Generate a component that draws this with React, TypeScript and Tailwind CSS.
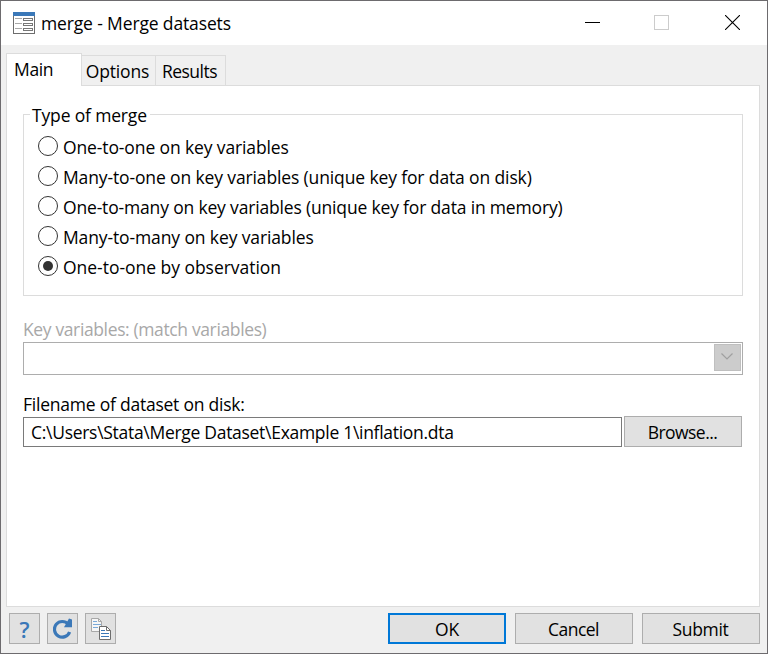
import { useState } from 'react';
import type { ReactNode } from 'react';

const mergeTypes = [
  { id: '1:1', label: 'One-to-one on key variables', text: 'tracking-[-0.12px]' },
  { id: 'm:1', label: 'Many-to-one on key variables (unique key for data on disk)', text: 'tracking-[-0.13px]' },
  { id: '1:m', label: 'One-to-many on key variables (unique key for data in memory)', text: 'tracking-[-0.17px]' },
  { id: 'm:m', label: 'Many-to-many on key variables', text: 'tracking-[-0.12px]' },
  { id: 'obs', label: 'One-to-one by observation', text: 'tracking-[-0.03px]' },
];

function FormIcon() {
  return (
    <svg width="22" height="22" viewBox="0 0 22 22" fill="none" shapeRendering="crispEdges">
      <rect x="0.5" y="0.5" width="21" height="21" fill="#fff" stroke="#6d6d6d" />
      <rect width="22" height="4" fill="#3b78b8" />
      <path d="M2 6.5h7M2 11.5h7M2 16.5h7" stroke="#a8a8a8" />
      <path d="M10.5 6.5h9v2h-9zM10.5 11.5h9v2h-9zM10.5 16.5h9v2h-9z" stroke="#777" />
    </svg>
  );
}

function RefreshIcon() {
  return (
    <svg width="19" height="21" viewBox="0 0 19 21" fill="none">
      <path d="M15.2 6.2A7.8 7.8 0 1 0 16.6 14" stroke="#3b78b8" strokeWidth="3.2" />
      <path d="M16 0.5L19 1.5V9.3H11z" fill="#3b78b8" />
    </svg>
  );
}

function CopyIcon() {
  return (
    <svg width="20" height="22" viewBox="0 0 20 22" fill="none">
      <path d="M0.5 0.5h7l3 3v10h-10z" fill="#f6f6f6" stroke="#a8a8a8" />
      <path d="M7.5 0.5v3h3" stroke="#a8a8a8" />
      <path d="M2 3.5h4M2 6.5h8M2 9.5h5" stroke="#7aa9d8" />
      <path d="M8.5 8.5h7l4 4v9h-11z" fill="#fff" stroke="#6d6d6d" />
      <path d="M15.5 8.5v4h4" stroke="#6d6d6d" />
      <path d="M10 12.5h4M10 15.5h8M10 18.5h8" stroke="#3b78b8" />
    </svg>
  );
}

function ToolButton({ label, children }: { label: string; children: ReactNode }) {
  return (
    <button aria-label={label} className="flex h-[31px] w-[31px] items-center justify-center border border-[#adadad] bg-[#e1e1e1]">
      {children}
    </button>
  );
}

export default function App() {
  const [selected, setSelected] = useState('obs');

  return (
    <div className="flex h-[654px] w-[768px] flex-col overflow-hidden border border-[#6d6b6e] bg-[#f0f0f0] font-['Open_Sans','Noto_Sans',sans-serif] text-[17.5px] leading-6 text-black">
      {/* Title bar */}
      <header className="flex h-11 shrink-0 items-center bg-white pl-3">
        <FormIcon />
        <h1 className="ml-1.5 tracking-[-0.14px] whitespace-pre">merge - Merge datasets</h1>
        <div className="mr-[27px] mb-px ml-auto flex items-center">
          <svg className="mr-[54px]" width="15" height="15" shapeRendering="crispEdges">
            <path d="M0 7.5h15" stroke="#000" />
          </svg>
          <svg className="mr-14" width="15" height="15" fill="none" shapeRendering="crispEdges">
            <rect x="0.5" y="0.5" width="14" height="14" stroke="#ccc" />
          </svg>
          <svg width="15" height="15" fill="none">
            <path d="M0 0l15 15M15 0l-15 15" stroke="#000" strokeWidth="1.1" />
          </svg>
        </div>
      </header>

      {/* Tabs */}
      <nav className="z-10 mt-2 -mb-px ml-[5px] flex h-[33px] shrink-0 items-end">
        <button className="h-[33px] w-[76px] border border-b-0 border-[#dcdcdc] bg-white pb-[3px] pl-[7px] text-left tracking-[-0.35px]">Main</button>
        <button className="h-[31px] w-[73px] border-y border-[#dcdcdc] pr-0.5 text-center tracking-[-0.13px]">Options</button>
        <button className="h-[31px] w-[71px] border border-[#dcdcdc] pr-0.5 text-center tracking-[-0.5px]">Results</button>
      </nav>

      <main className="mr-[7px] ml-[5px] flex h-[522px] shrink-0 flex-col border border-[#dcdcdc] bg-white px-4">
        <fieldset className="mt-3.5 h-[196px] border border-[#dcdcdc] px-[6px]">
          <legend className="pt-[3px] pr-[3px] pb-px pl-0.5 tracking-[-0.16px]">Type of merge</legend>
          <div className="flex flex-col pt-[5px] pl-2">
            {mergeTypes.map((type) => (
              <label key={type.id} className="flex h-[30px] items-center">
                <input
                  type="radio"
                  name="merge-type"
                  className="sr-only"
                  checked={selected === type.id}
                  onChange={() => setSelected(type.id)}
                />
                <span className="mb-1 flex size-5 items-center justify-center rounded-full border border-[#333]">
                  {selected === type.id && <span className="size-2.5 rounded-full bg-[#333]" />}
                </span>
                <span className={`mb-0.5 ml-[5px] whitespace-nowrap ${type.text}`}>{type.label}</span>
              </label>
            ))}
          </div>
        </fieldset>

        <p className="mt-[21px] mb-px tracking-[-0.37px] text-[#a8a8a8]">Key variables: (match variables)</p>
        <div className="flex h-[33px] items-start justify-end border border-[#adadad] p-px">
          <span className="flex size-[27px] items-center justify-center border border-[#bfbfbf] bg-[#ccc]">
            <svg className="mr-px mb-0.5" width="12" height="7" fill="none">
              <path d="M0.5 0.5l5.5 5.5l5.5-5.5" stroke="#a0a0a0" strokeWidth="1.2" />
            </svg>
          </span>
        </div>

        <p className="mt-[17px] tracking-[-0.23px]">Filename of dataset on disk:</p>
        <div className="flex items-end gap-0.5">
          <div className="flex h-[30px] w-[599px] items-center border border-[#7a7a7a] pl-[7px] tracking-[-0.29px] whitespace-nowrap">
            C:\Users\Stata\Merge Dataset\Example 1\inflation.dta
          </div>
          <button className="h-[31px] w-[118px] border border-[#adadad] bg-[#e1e1e1] pr-px tracking-[-0.55px]">Browse...</button>
        </div>
      </main>

      {/* Command buttons */}
      <footer className="mt-1.5 mr-[7px] ml-2 flex justify-between">
        <div className="flex gap-[7px]">
          <ToolButton label="Help">
            <span className="text-[22px] font-semibold text-[#3b78b8]">?</span>
          </ToolButton>
          <ToolButton label="Reset">
            <RefreshIcon />
          </ToolButton>
          <ToolButton label="Copy command">
            <CopyIcon />
          </ToolButton>
        </div>
        <div className="flex gap-[9px]">
          <button className="h-[31px] w-[118px] border-2 border-[#0078d7] bg-[#e1e1e1] tracking-[-0.1px]">OK</button>
          <button className="h-[31px] w-[118px] border border-[#adadad] bg-[#e1e1e1] pr-px tracking-[-0.55px]">Cancel</button>
          <button className="h-[31px] w-[118px] border border-[#adadad] bg-[#e1e1e1] pr-px tracking-[-0.3px]">Submit</button>
        </div>
      </footer>
    </div>
  );
}
